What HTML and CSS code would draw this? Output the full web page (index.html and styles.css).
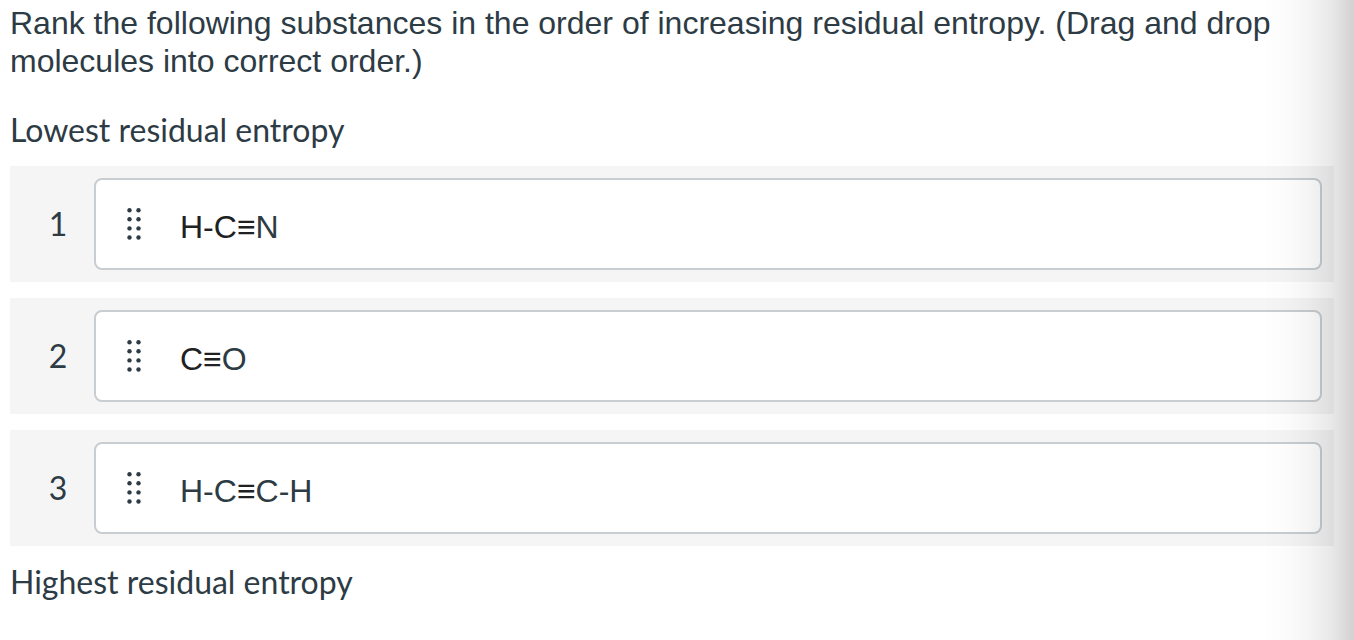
FILE: index.html
```html
<!DOCTYPE html>
<html lang="en">
<head>
  <meta charset="UTF-8">
  <title>Residual Entropy Ranking</title>
  <link rel="stylesheet" href="styles.css">
</head>
<body>

<main class="question">
  <p class="prompt">Rank the following substances in the order of increasing residual entropy. (Drag and drop molecules into correct order.)</p>

  <p class="range-label">Lowest residual entropy</p>

  <ol class="ranking">
    <li class="rank-row">
      <span class="rank-number">1</span>
      <div class="rank-item">
        <button type="button" class="drag-handle" aria-label="Move H-C≡N">
          <svg width="16" height="34" viewBox="0 0 16 34" fill="currentColor">
            <circle cx="3.5" cy="3.2" r="2.2"/><circle cx="12.5" cy="3.2" r="2.2"/>
            <circle cx="3.5" cy="12.3" r="2.2"/><circle cx="12.5" cy="12.3" r="2.2"/>
            <circle cx="3.5" cy="21.4" r="2.2"/><circle cx="12.5" cy="21.4" r="2.2"/>
            <circle cx="3.5" cy="30.5" r="2.2"/><circle cx="12.5" cy="30.5" r="2.2"/>
          </svg>
        </button>
        <span class="formula"><span class="dark">H-C≡</span>N</span>
      </div>
    </li>
    <li class="rank-row">
      <span class="rank-number">2</span>
      <div class="rank-item">
        <button type="button" class="drag-handle" aria-label="Move C≡O">
          <svg width="16" height="34" viewBox="0 0 16 34" fill="currentColor">
            <circle cx="3.5" cy="3.2" r="2.2"/><circle cx="12.5" cy="3.2" r="2.2"/>
            <circle cx="3.5" cy="12.3" r="2.2"/><circle cx="12.5" cy="12.3" r="2.2"/>
            <circle cx="3.5" cy="21.4" r="2.2"/><circle cx="12.5" cy="21.4" r="2.2"/>
            <circle cx="3.5" cy="30.5" r="2.2"/><circle cx="12.5" cy="30.5" r="2.2"/>
          </svg>
        </button>
        <span class="formula"><span class="dark">C≡</span>O</span>
      </div>
    </li>
    <li class="rank-row">
      <span class="rank-number">3</span>
      <div class="rank-item">
        <button type="button" class="drag-handle" aria-label="Move H-C≡C-H">
          <svg width="16" height="34" viewBox="0 0 16 34" fill="currentColor">
            <circle cx="3.5" cy="3.2" r="2.2"/><circle cx="12.5" cy="3.2" r="2.2"/>
            <circle cx="3.5" cy="12.3" r="2.2"/><circle cx="12.5" cy="12.3" r="2.2"/>
            <circle cx="3.5" cy="21.4" r="2.2"/><circle cx="12.5" cy="21.4" r="2.2"/>
            <circle cx="3.5" cy="30.5" r="2.2"/><circle cx="12.5" cy="30.5" r="2.2"/>
          </svg>
        </button>
        <span class="formula">H-C<span class="dark">≡</span>C-H</span>
      </div>
    </li>
  </ol>

  <p class="range-label">Highest residual entropy</p>
</main>

<div class="edge-shadow"></div>

</body>
</html>
```
FILE: styles.css
```css
* {
  box-sizing: border-box;
}
body {
  margin: 0;
  background-color: #fff;
  color: #2d3b45;
  font-family: Lato, sans-serif;
  font-size: 32px;
}
.question {
  padding: 4px 20px 0 10px;
}
.prompt {
  margin: 0 0 26px;
  font-family: "Liberation Sans", Arial, sans-serif;
  line-height: 38px;
}
.range-label {
  margin: 0;
  line-height: 48px;
}
.ranking {
  list-style: none;
  margin: 12px 0 12px;
  padding: 0;
  display: flex;
  flex-direction: column;
  gap: 16px;
}
.rank-row {
  display: flex;
  align-items: center;
  padding: 12px;
  background-color: #f5f5f5;
}
.rank-number {
  width: 72px;
  padding-bottom: 2px;
  text-align: center;
}
.rank-item {
  flex: 1;
  display: flex;
  align-items: center;
  gap: 38px;
  min-height: 92px;
  padding: 0 30px;
  background-color: #fff;
  border: 2px solid #c7cdd1;
  border-radius: 8px;
}
.drag-handle {
  display: flex;
  padding: 0;
  border: none;
  background: none;
  color: #2d3b45;
  cursor: move;
}
.formula {
  padding-top: 6px;
  font-family: "Liberation Sans", Arial, sans-serif;
}
.dark {
  color: #202122;
}

/* Shadow along the right side of the window */
.edge-shadow {
  position: fixed;
  top: 0;
  right: 0;
  bottom: 0;
  width: 92px;
  background: linear-gradient(to right, rgba(0,0,0,0), rgba(0,0,0,0.01) 25%, rgba(0,0,0,0.04) 50%, rgba(0,0,0,0.09) 75%, rgba(0,0,0,0.18));
  pointer-events: none;
}
```
